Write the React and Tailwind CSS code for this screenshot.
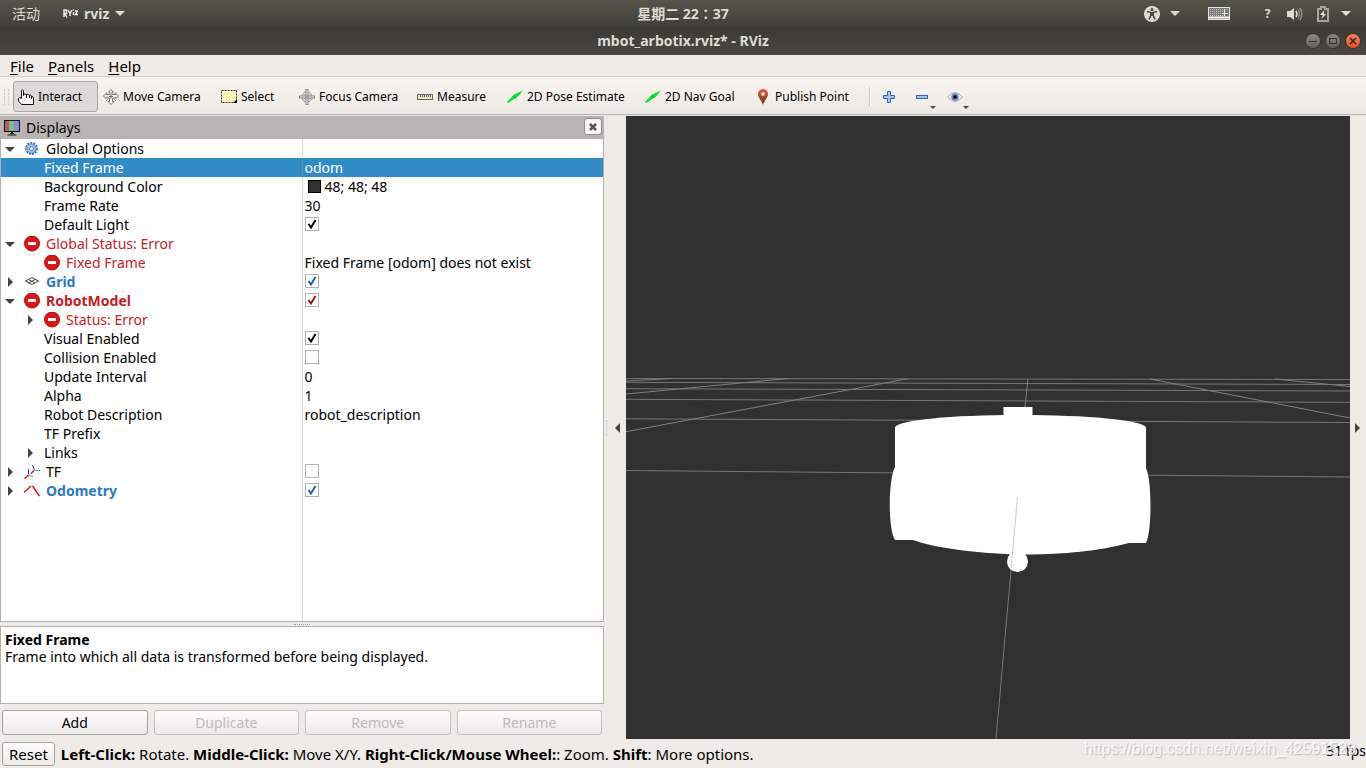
import { Fragment } from "react"
import clsx from "clsx"

const iconBox = "block size-4 shrink-0"

function HandIcon() {
  return (
    <svg className={iconBox} viewBox="0 0 16 16" fill="#fff" stroke="#111" strokeLinejoin="round">
      <path d="M3.5 9.5V1.5Q4.5 0 5.5 1.5V6.5L6 5Q7.5 4.500 8 6L9 5Q10.500 5 11 6.500L12 6Q13.500 6 13.500 8L14 7.500Q15.500 7.500 15.500 9V15.500H3.500L.5 12V9.500L1.500 8.500Z" />
      <path d="M8.500 6V9M11.500 7V9M13.500 8V10" fill="none" />
    </svg>
  )
}

function MoveIcon() {
  return (
    <svg className={iconBox} viewBox="0 0 16 16" fill="#f4f2ee" stroke="#777">
      <path d="M8 .5L10.500 3H9V5.500L13 5.500V4.500L15.500 7L13 9.500V8.500L9.500 9.500V12.500H11L8 15.500L5 12.500H6.500V9.500L3 8.500V9.500L.5 7L3 4.500V5.500L7 5.500V3H5.500Z" />
      <path d="M3 3.500L6 6M13 3.500L10 6M3 12L6 9M13 12L10 9" stroke="#555" strokeDasharray="1 1" />
      <path d="M8 5.500V9.500M6 7.500H10" stroke="#666" />
    </svg>
  )
}

function SelectIcon() {
  return (
    <svg className={iconBox} viewBox="0 0 16 16">
      <rect x=".5" y="1.500" width="15" height="12" fill="#fdf5b8" stroke="#333" strokeDasharray="2 1" />
      <path d="M16 10V14H12Z" fill="#000" />
    </svg>
  )
}

function FocusIcon() {
  return (
    <svg className={iconBox} viewBox="0 0 16 16" fill="none" stroke="#888">
      <circle cx="8" cy="8" r="5" />
      <circle cx="8" cy="8" r="3" stroke="#aaa" />
      <path d="M8 0V16M0 8H16" stroke="#888" strokeWidth="3" />
      <path d="M8 1V15M1 8H15" stroke="#eee" />
      <path d="M8 6V10M6 8H10" stroke="#888" />
    </svg>
  )
}

function MeasureIcon() {
  return (
    <svg className={iconBox} viewBox="0 0 16 16">
      <rect x=".5" y="5.500" width="15" height="5" fill="#ece5b5" stroke="#666" />
      <path d="M3.500 6V8M5.500 6V8M7.500 6V8M9.500 6V8M11.500 6V8M13.500 6V8" stroke="#666" />
    </svg>
  )
}

function ArrowIcon() {
  return (
    <svg className={iconBox} viewBox="0 0 16 16">
      <path d="M0 13L6.500 6L9 4.500L16 1.500L11 7.500L8.500 9L1.500 14Z" fill="#0be52b" />
      <path d="M6.500 7L9.500 9" stroke="#078c18" />
    </svg>
  )
}

function PinIcon() {
  return (
    <svg className={iconBox} viewBox="0 0 16 16">
      <defs>
        <linearGradient id="pin" x2="0" y2="1">
          <stop stopColor="#f4583a" />
          <stop offset="1" stopColor="#5b3a20" />
        </linearGradient>
      </defs>
      <path d="M8 16C7 12 3 9 3 5A5 5 0 0 1 13 5C13 9 9 12 8 16Z" fill="url(#pin)" />
      <circle cx="8" cy="5" r="1.800" fill="#fff" />
    </svg>
  )
}

function PlusIcon() {
  return (
    <svg className={iconBox} viewBox="0 0 16 16">
      <path d="M6.500 2.500H9.500V6.500H13.500V9.500H9.500V13.500H6.500V9.500H2.500V6.500H6.500Z" fill="#a9c6ea" stroke="#2f67b0" />
    </svg>
  )
}

function MinusIcon() {
  return (
    <svg className={iconBox} viewBox="0 0 16 16">
      <rect x="2.500" y="6.500" width="11" height="3" fill="#a9c6ea" stroke="#2f67b0" />
    </svg>
  )
}

function EyeIcon() {
  return (
    <svg className={iconBox} viewBox="0 0 16 16">
      <path d="M.5 8Q8-1 15.500 8Q8 17 .5 8Z" fill="#eee" stroke="#aaa" />
      <circle cx="8" cy="8" r="3.700" fill="#6c83c4" />
      <circle cx="8" cy="8" r="1.800" fill="#0a0a1c" />
    </svg>
  )
}

function MonitorIcon() {
  return (
    <svg className={iconBox} viewBox="0 0 16 16">
      <rect x="1" y="1" width="5" height="10" fill="#b85a60" />
      <rect x="5" y="1" width="6" height="10" fill="#78c57a" />
      <rect x="10" y="1" width="5" height="10" fill="#8a8ae0" />
      <rect x=".5" y=".5" width="15" height="11" fill="none" stroke="#111" />
      <path d="M8 12V14" stroke="#111" strokeWidth="2" />
      <path d="M6 13.500H10M3.500 15H12.500" stroke="#111" />
    </svg>
  )
}

function GearIcon() {
  return (
    <svg className={iconBox} viewBox="0 0 16 16" fill="none">
      <circle cx="7.500" cy="7.500" r="5.500" stroke="#4673b8" strokeWidth="2" strokeDasharray="2 1" />
      <circle cx="7.500" cy="7.500" r="4.500" fill="#a9c3ea" stroke="#5f8bd0" />
      <circle cx="7.500" cy="7.500" r="2" fill="#fff" stroke="#4673b8" />
    </svg>
  )
}

function ErrorIcon() {
  return (
    <svg className={iconBox} viewBox="0 0 16 16">
      <circle cx="8" cy="7.500" r="7.500" fill="#e01414" stroke="#a80c0c" />
      <rect x="4" y="6" width="8" height="3" fill="#fff" />
    </svg>
  )
}

function GridIcon() {
  return (
    <svg className={iconBox} viewBox="0 0 16 16" fill="none" stroke="#444">
      <path d="M1.500 7L8 3.500L14.500 7L8 10.500ZM4.500 5.500L11 9M11 5.500L4.500 9" />
    </svg>
  )
}

function TfIcon() {
  return (
    <svg className={iconBox} viewBox="0 0 16 16" fill="none">
      <path d="M10 6L5 11" stroke="#ddc030" />
      <path d="M4.500 5V10.500M8.500 1L10.500 6" stroke="#2020e8" />
      <path d="M10.500 6.500H16M4.500 11.500L9 12.500" stroke="#1bdc2b" />
      <path d="M10 6.500L7 9.500M4.500 11L.5 14.500" stroke="#e01818" strokeWidth="1.500" />
    </svg>
  )
}

function OdomIcon() {
  return (
    <svg className={iconBox} viewBox="0 0 16 16" fill="none" stroke="#e81c0c">
      <path d="M0 9.500L7 3" strokeWidth="1.500" />
      <path d="M8.500 3L15.500 13M10 5L14 11" strokeWidth="1.500" />
    </svg>
  )
}

function Caret({ size = "h-[5px] w-[10px]" }) {
  return (
    <svg className={clsx("block shrink-0", size)} viewBox="0 0 10 5" fill="currentColor">
      <path d="M0 0H10L5 5Z" />
    </svg>
  )
}

const tools = [
  { label: "Interact", icon: HandIcon, width: "w-[85px]", active: true },
  { label: "Move Camera", icon: MoveIcon, width: "w-[118px]" },
  { label: "Select", icon: SelectIcon, width: "w-[78px]" },
  { label: "Focus Camera", icon: FocusIcon, width: "w-[118px]" },
  { label: "Measure", icon: MeasureIcon, width: "w-[90px]" },
  { label: "2D Pose Estimate", icon: ArrowIcon, width: "w-[138px]" },
  { label: "2D Nav Goal", icon: ArrowIcon, width: "w-[110px]" },
  { label: "Publish Point", icon: PinIcon, width: "w-[112px]" },
]

const rows = [
  { label: "Global Options", depth: 0, icon: GearIcon, arrow: "down" },
  { label: "Fixed Frame", depth: 1, value: "odom", selected: true },
  { label: "Background Color", depth: 1, value: "48; 48; 48", swatch: true },
  { label: "Frame Rate", depth: 1, value: "30" },
  { label: "Default Light", depth: 1, checked: true },
  { label: "Global Status: Error", depth: 0, icon: ErrorIcon, arrow: "down", tone: "text-[#c92127]" },
  { label: "Fixed Frame", depth: 1, icon: ErrorIcon, tone: "text-[#c92127]", value: "Fixed Frame [odom] does not exist" },
  { label: "Grid", depth: 0, icon: GridIcon, arrow: "right", tone: "font-bold text-[#2a7bc8]", checked: true, mark: "text-[#1f61a8]" },
  { label: "RobotModel", depth: 0, icon: ErrorIcon, arrow: "down", tone: "font-bold text-[#c41c22]", checked: true, mark: "text-[#a3141a]" },
  { label: "Status: Error", depth: 1, icon: ErrorIcon, arrow: "right", tone: "text-[#c92127]" },
  { label: "Visual Enabled", depth: 1, checked: true },
  { label: "Collision Enabled", depth: 1, checked: false },
  { label: "Update Interval", depth: 1, value: "0" },
  { label: "Alpha", depth: 1, value: "1" },
  { label: "Robot Description", depth: 1, value: "robot_description" },
  { label: "TF Prefix", depth: 1 },
  { label: "Links", depth: 1, arrow: "right" },
  { label: "TF", depth: 0, icon: TfIcon, arrow: "right", checked: false },
  { label: "Odometry", depth: 0, icon: OdomIcon, arrow: "right", tone: "font-bold text-[#2a7bc8]", checked: true, mark: "text-[#1f61a8]" },
]

const hints = [
  ["Left-Click:", " Rotate. "],
  ["Middle-Click:", " Move X/Y. "],
  ["Right-Click/Mouse Wheel:", ": Zoom. "],
  ["Shift", ": More options."],
]

function SystemBar() {
  return (
    <header className="grid h-[27px] shrink-0 grid-cols-3 items-center bg-gradient-to-b from-[#58544c] to-[#403f3a] text-sm text-[#dfdbd2]">
      <div className="flex items-center pl-3">
        <button className="w-[50px] text-left">活动</button>
        <button className="flex items-center gap-1.5 font-bold">
          <svg className="h-4 w-4" viewBox="0 0 16 16" fill="none" stroke="#eee">
            <path d="M2 11V4H4.500V7.500H2M3 8L5 11.500M6 4L8 7.500L10 4M8 7.500V10M11.500 6V9M11 4H12M13 5H15.500L13.500 8.500H16" strokeWidth="1.500" />
          </svg>
          rviz
          <Caret />
        </button>
      </div>
      <button className="justify-self-center font-['Noto_Sans','Noto_Sans_CJK_TC',sans-serif] font-bold">星期二 22：37</button>
      <div className="flex items-center justify-end pr-[15px]">
        <button aria-label="Accessibility" className="mr-7 flex items-center gap-2.5">
          <svg className="size-4" viewBox="0 0 16 16">
            <circle cx="8" cy="8" r="8" fill="#dfdbd2" />
            <circle cx="8" cy="3.500" r="1.500" fill="#46443e" />
            <path d="M3 5.500L7 6.500V9L5 13.500M13 5.500L9 6.500V9L11 13.500" fill="none" stroke="#46443e" strokeWidth="1.500" />
            <path d="M6.500 6H9.500V10H6.500Z" fill="#46443e" />
          </svg>
          <Caret />
        </button>
        <button aria-label="Keyboard" className="mr-8">
          <svg className="block h-[13px] w-[22px]" viewBox="0 0 22 13">
            <rect x=".5" y=".5" width="21" height="12" fill="#777" stroke="#e8e6e0" />
            <path d="M2 2.500H16M2 4.500H16M2 6.500H16M2 8.500H16" stroke="#ccc" strokeDasharray="1 1" />
            <path d="M1 10.500H21" stroke="#f4f4f0" strokeWidth="2" />
            <path d="M16.500 2V9M14 6.500H20" stroke="#e8e8e4" />
            <rect x="17" y="2" width="3" height="1" fill="#44cc44" />
          </svg>
        </button>
        <button aria-label="Input method" className="mr-3.5 w-[11px] text-xs font-bold">?</button>
        <button aria-label="System" className="flex items-center">
          <svg className="mr-3.5 size-4" viewBox="0 0 16 16" fill="none">
            <path d="M0 5H3L7 2V14L3 11H0Z" fill="#dfdbd2" />
            <path d="M9 5Q11 8 9 11" stroke="#dfdbd2" strokeWidth="1.500" />
            <path d="M11 3.500Q13.500 8 11 12.500M13 2Q16.500 8 13 14" stroke="#8d8a82" strokeWidth="1.500" />
          </svg>
          <svg className="mr-3 h-4 w-3" viewBox="0 0 12 16">
            <path d="M4 1H8V3H11V15H1V3H4Z" fill="none" stroke="#a7a49c" strokeWidth="2" />
            <path d="M7.500 4L3 9H6L4.500 13L9 8H6.500Z" fill="#eee" />
          </svg>
          <Caret />
        </button>
      </div>
    </header>
  )
}

function TitleBar() {
  const round = "flex size-4 items-center justify-center rounded-full border border-[#35342f]"
  return (
    <div className="grid h-7 shrink-0 grid-cols-[1fr_auto_1fr] items-center bg-gradient-to-b from-[#3a3934] to-[#4a4843] text-sm font-bold text-[#dfdbd2]">
      <span />
      <h1>mbot_arbotix.rviz* - RViz</h1>
      <div className="flex justify-end gap-1 pr-[5px]">
        <button aria-label="Minimize" className={clsx(round, "bg-gradient-to-b from-[#8b887f] to-[#65635c]")}>
          <svg className="size-2" viewBox="0 0 8 8"><path d="M0 4.500H8" stroke="#33322d" /></svg>
        </button>
        <button aria-label="Maximize" className={clsx(round, "bg-gradient-to-b from-[#8b887f] to-[#65635c]")}>
          <svg className="size-2" viewBox="0 0 8 8"><rect x=".5" y="1.500" width="7" height="5" fill="none" stroke="#33322d" /></svg>
        </button>
        <button aria-label="Close" className={clsx(round, "bg-gradient-to-b from-[#f4805c] to-[#e8501c]")}>
          <svg className="size-2" viewBox="0 0 8 8"><path d="M1 1L7 7M7 1L1 7" stroke="#33221a" strokeWidth="1.500" /></svg>
        </button>
      </div>
    </div>
  )
}

function MenuBar() {
  return (
    <nav className="flex h-[22px] shrink-0 items-center gap-3.5 border-b border-[#d3d0ca] pl-2.5 text-[15px] leading-5">
      {["File", "Panels", "Help"].map((item) => (
        <button key={item}>
          <span className="underline underline-offset-2">{item[0]}</span>
          {item.slice(1)}
        </button>
      ))}
    </nav>
  )
}

function ToolBar() {
  return (
    <div className="flex h-[38px] shrink-0 items-center border-b border-[#b5b2ad] bg-gradient-to-b from-[#f8f5f0] to-[#edeae5] pt-0.5 pl-1 text-xs">
      <div className="mr-1 h-4 w-[5px] border-x border-dotted border-[#c5c2bd]" />
      {tools.map(({ label, icon: Icon, width, active }) => (
        <button
          key={label}
          className={clsx(
            "flex h-[31px] items-center gap-1 whitespace-nowrap rounded-[3px] border pl-1",
            width,
            active ? "border-[#a9a6a2] bg-[#dcd9d6]" : "border-transparent"
          )}
        >
          <Icon />
          {label}
        </button>
      ))}
      <div className="mr-2.5 ml-[7px] h-[19px] w-0.5 border-l border-[#c8c5c0] bg-white" />
      <button aria-label="Add tool"><PlusIcon /></button>
      <button aria-label="Remove tool" className="relative ml-[17px]">
        <MinusIcon />
        <span className="absolute -right-1.5 -bottom-1 text-[#444]"><Caret size="h-[3px] w-1.5" /></span>
      </button>
      <button aria-label="Visibility" className="relative ml-[17px]">
        <EyeIcon />
        <span className="absolute -right-1.5 -bottom-1 text-[#444]"><Caret size="h-[3px] w-1.5" /></span>
      </button>
    </div>
  )
}

function CheckBox({ id, checked, mark = "text-black" }) {
  return (
    <span className={clsx("relative block size-3.5", mark)}>
      <input
        id={id}
        type="checkbox"
        defaultChecked={checked}
        className="peer block size-3.5 appearance-none border border-[#b4b0ab] bg-white"
      />
      <svg
        className="pointer-events-none absolute inset-0 hidden size-3.5 peer-checked:block"
        viewBox="0 0 14 14"
        fill="none"
        stroke="currentColor"
        strokeWidth="2"
      >
        <path d="M3.500 7L6 10.500L10.500 3" />
      </svg>
    </span>
  )
}

function TreeRow({ row, id }) {
  const Icon = row.icon
  const isCheck = row.checked !== undefined
  return (
    <tr className={clsx("h-[19px]", row.selected && "bg-[#308cc6] text-white")}>
      <td className="p-0">
        <div className={clsx("flex h-[19px] items-center", row.depth === 0 ? "pl-1" : "pl-6")}>
          <span className="mr-2 flex w-[11px] text-[#444]">
            {row.arrow && (
              <svg className="size-[10px]" viewBox="0 0 10 10" fill="currentColor">
                <path d={row.arrow === "down" ? "M0 3H10L5 8Z" : "M3 0L8 5L3 10Z"} />
              </svg>
            )}
          </span>
          {Icon && <span className="mr-1.5"><Icon /></span>}
          {isCheck ? (
            <label htmlFor={id} className={row.tone}>{row.label}</label>
          ) : (
            <span className={row.tone}>{row.label}</span>
          )}
        </div>
      </td>
      <td className={clsx("border-l p-0 pl-0.5", row.selected ? "border-[#4e94c0]" : "border-[#dcdad7]")}>
        <div className="flex h-[19px] items-center">
          {isCheck && (
            <span className="flex h-full items-start pt-0.5">
              <CheckBox id={id} checked={row.checked} mark={row.mark} />
            </span>
          )}
          {row.swatch && <span className="mr-1 ml-[3px] size-[13px] border border-black bg-[#303030]" />}
          {row.value}
        </div>
      </td>
    </tr>
  )
}

function DisplaysPanel() {
  return (
    <aside className="flex w-[604px] shrink-0 flex-col pb-1">
      <div className="flex h-[23px] items-center bg-[#b8b4b1] pr-0.5 pl-1">
        <MonitorIcon />
        <h2 className="ml-1.5 flex-1">Displays</h2>
        <button aria-label="Close panel" className="mb-0.5 flex h-[17px] w-[18px] items-center justify-center rounded-[3px] border border-[#8f8c88] bg-[#f6f5f3]">
          <svg className="size-2" viewBox="0 0 8 8"><path d="M1 1L7 7M7 1L1 7" stroke="#555" strokeWidth="2.500" /></svg>
        </button>
      </div>

      <div className="flex min-h-0 flex-1 flex-col border border-t-0 border-[#b4b0ab] bg-white">
        <table className="w-full table-fixed border-collapse whitespace-nowrap">
          <tbody>
            {rows.map((row, i) => (
              <TreeRow key={i} row={row} id={`prop-${i}`} />
            ))}
          </tbody>
        </table>
        <div className="grid flex-1 grid-cols-2">
          <div />
          <div className="border-l border-[#dcdad7]" />
        </div>
      </div>

      {/* Splitter handle */}
      <div className="flex h-1 items-center justify-center">
        <div className="w-4 border-t border-dotted border-[#a5a29d]" />
      </div>

      <div className="h-[78px] border border-[#b4b0ab] bg-white px-1 pt-1 leading-[17px]">
        <h3 className="font-bold">Fixed Frame</h3>
        <p>Frame into which all data is transformed before being displayed.</p>
      </div>

      <div className="mt-1.5 grid grid-cols-4 gap-1.5 px-0.5">
        {["Add", "Duplicate", "Remove", "Rename"].map((name, i) => (
          <button
            key={name}
            disabled={i > 0}
            className="h-[25px] rounded-[3px] border border-[#a5a19d] bg-gradient-to-b from-[#fdfdfc] to-[#eceae8] disabled:border-[#c6c3bf] disabled:text-[#bebbb8]"
          >
            {name}
          </button>
        ))}
      </div>
    </aside>
  )
}

function Viewport() {
  return (
    <svg
      className="h-full min-w-0 flex-1 bg-[#303030]"
      viewBox="626 116 724 623"
      preserveAspectRatio="xMidYMid slice"
      role="img"
      aria-label="3D view"
    >
      {/* Ground grid */}
      <g stroke="#777" fill="none">
        <path d="M626 378.500L1350 379.500M626 382.300L1350 384.500M626 388.700L1350 391M626 399.300L1350 402.300M626 418.800L1350 422.500M626 470.500L1350 477" />
        <path d="M626 381L672 378.500M626 394L788 378.500M626 431.700L908 378.700M1028 379L1024 416M1150 379L1350 418M1275 379L1350 386.500" stroke="#808080" />
      </g>
      {/* Robot body, wheels and caster */}
      <g fill="#fff">
        <path d="M1003.500 407H1032.500V416H1003.500Z" />
        <path d="M895 427C900 420 950 415 1018 415C1090 415 1140 420 1146 427V468C1152 480 1152 532 1146 543H1129C1100 551 1060 554.500 1030 554.500C980 554.500 935 548 913 540H895C888 530 888 480 895 467Z" />
        <circle cx="1017.500" cy="561.500" r="10.500" />
      </g>
      <path d="M1017.500 497L1011 570" stroke="#ccc" />
      <path d="M1011 570L996 739" stroke="#777" />
    </svg>
  )
}

function StatusBar() {
  return (
    <footer className="relative flex h-[29px] shrink-0 items-center pl-0.5 whitespace-nowrap">
      <button className="h-6 rounded-[3px] border border-[#a5a19d] bg-gradient-to-b from-[#fdfdfc] to-[#eceae8] px-1.5 text-[15px] leading-5">Reset</button>
      <p className="ml-1.5 flex-1 text-[15px] leading-5">
        {hints.map(([key, action]) => (
          <Fragment key={key}>
            <b>{key}</b>
            {action}
          </Fragment>
        ))}
      </p>
      <span className="mb-1.5">31 fps</span>
      <span className="pointer-events-none absolute top-0 right-2.5 font-['Liberation_Sans',sans-serif] text-base leading-5 text-white/80 [text-shadow:1px_1px_1px_#bbb]">
        https://blog.csdn.net/weixin_42591529
      </span>
    </footer>
  )
}

export default function App() {
  return (
    <div className="flex h-screen flex-col overflow-hidden bg-[#efebe7] font-['Noto_Sans','Noto_Sans_CJK_SC',sans-serif] text-sm text-black">
      <SystemBar />
      <TitleBar />
      <MenuBar />
      <ToolBar />
      <main className="flex min-h-0 flex-1 pt-px">
        <DisplaysPanel />
        <div className="flex w-[22px] shrink-0 items-center">
          <div className="ml-0.5 h-4 border-l border-dotted border-[#bbb]" />
          <svg className="ml-2 h-2.5 w-[5px]" viewBox="0 0 5 10" fill="#444"><path d="M5 0V10L0 5Z" /></svg>
        </div>
        <Viewport />
        <div className="flex w-4 shrink-0 items-center pl-[5px]">
          <svg className="h-2.5 w-[5px]" viewBox="0 0 5 10" fill="#444"><path d="M0 0V10L5 5Z" /></svg>
        </div>
      </main>
      <StatusBar />
    </div>
  )
}
